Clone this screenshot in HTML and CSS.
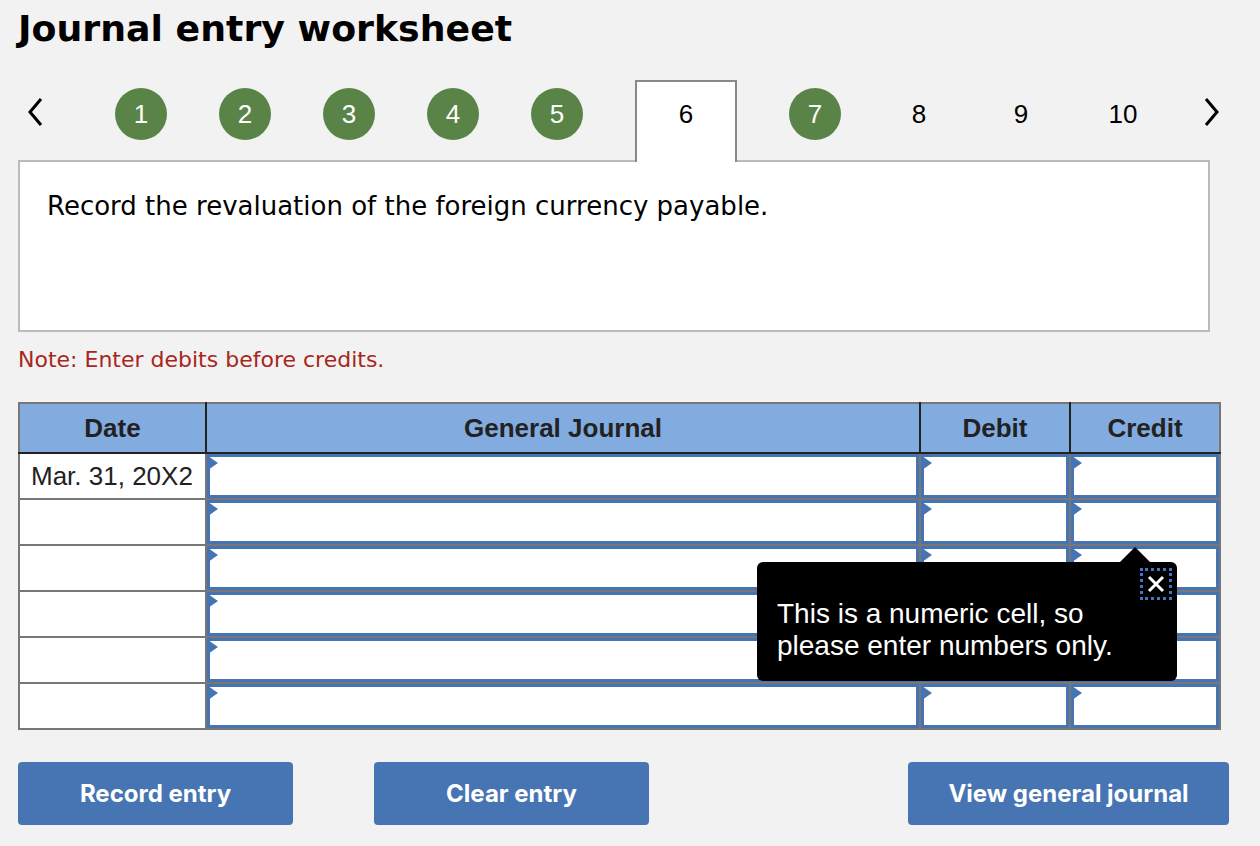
FILE: index.html
```html
<!DOCTYPE html>
<html lang="en">
<head>
  <meta charset="UTF-8" />
  <meta name="viewport" content="width=device-width, initial-scale=1.0" />
  <title>Journal entry worksheet</title>
  <link rel="stylesheet" href="styles.css">
</head>
<body>
  <div class="page">
    <h1>Journal entry worksheet</h1>

    <div class="tabs">
      <span class="arrow prev">
        <svg width="18" height="30" viewBox="0 0 18 30"><path d="M15 2 L4 15 L15 28" fill="none" stroke="#000" stroke-width="3"/></svg>
      </span>
      <span class="step done">1</span>
      <span class="step done">2</span>
      <span class="step done">3</span>
      <span class="step done">4</span>
      <span class="step done">5</span>
      <span class="step active">6</span>
      <span class="step done">7</span>
      <span class="step plain">8</span>
      <span class="step plain">9</span>
      <span class="step plain">10</span>
      <span class="arrow next">
        <svg width="18" height="30" viewBox="0 0 18 30"><path d="M3 2 L14 15 L3 28" fill="none" stroke="#000" stroke-width="3"/></svg>
      </span>
    </div>

    <div class="question">
      <p>Record the revaluation of the foreign currency payable.</p>
    </div>

    <p class="note">Note: Enter debits before credits.</p>

    <div class="journal-wrap">
      <table class="journal">
        <colgroup>
          <col class="c-date">
          <col class="c-account">
          <col class="c-amount">
          <col class="c-amount">
        </colgroup>
        <thead>
          <tr>
            <th>Date</th>
            <th>General Journal</th>
            <th>Debit</th>
            <th>Credit</th>
          </tr>
        </thead>
        <tbody id="rows"></tbody>
      </table>

      <div class="tooltip">
        <span class="close">
          <svg width="20" height="20" viewBox="0 0 20 20"><path d="M3 3 L17 17 M17 3 L3 17" stroke="#fff" stroke-width="3"/></svg>
        </span>
        This is a numeric cell, so<br>please enter numbers only.
      </div>
    </div>

    <div class="actions">
      <button class="btn record">Record entry</button>
      <button class="btn clear">Clear entry</button>
      <button class="btn view">View general journal</button>
    </div>
  </div>

  <script>
    // build the six journal rows
    const rows = document.getElementById('rows');
    for (let i = 0; i < 6; i++) {
      const tr = document.createElement('tr');
      tr.innerHTML =
        '<td class="date">' + (i === 0 ? 'Mar. 31, 20X2' : '') + '</td>' +
        '<td class="cell"><span class="flag"></span><input type="text"></td>' +
        '<td class="cell"><span class="flag"></span><input type="text"></td>' +
        '<td class="cell"><span class="flag"></span><input type="text"></td>';
      rows.appendChild(tr);
    }
  </script>
</body>
</html>
```

FILE: styles.css
```css
body {
  margin: 0;
  background: #f2f2f2;
  font-family: 'Liberation Sans', Arial, sans-serif;
  color: #000;
}
.page {
  padding: 8px 18px 0 18px;
}
h1 {
  margin: 0;
  font-family: 'DejaVu Sans', Verdana, sans-serif;
  font-size: 36.3px;
  font-weight: bold;
  line-height: 42px;
}

/* step tabs */
.tabs {
  display: flex;
  align-items: flex-start;
  gap: 52px;
  height: 80px;
  margin-top: 30px;
  position: relative;
  z-index: 1;
}
.arrow {
  width: 34px;
  height: 52px;
  margin-top: 6px;
  display: flex;
  align-items: center;
  justify-content: center;
}
.prev {
  margin-right: 11px;
}
.next {
  width: 18px;
  margin-left: 2px;
}
.step {
  width: 52px;
  height: 52px;
  margin-top: 8px;
  display: flex;
  align-items: center;
  justify-content: center;
  font-size: 26px;
}
.step.done {
  background: #5a8447;
  color: #fff;
  border-radius: 50%;
}
.step.plain + .step.plain {
  margin-left: -2px;
}
.step.active {
  width: 102px;
  height: 82px;
  margin-top: 0;
  box-sizing: border-box;
  background: #fff;
  border: 2px solid #888;
  border-bottom: none;
  padding-bottom: 16px;
}

.question {
  width: 1192px;
  height: 172px;
  box-sizing: border-box;
  background: #fff;
  border: 2px solid #bbb;
}
.question p {
  margin: 0;
  padding: 29px 0 0 27px;
  font-family: 'DejaVu Sans', Verdana, sans-serif;
  font-size: 26px;
}
.note {
  margin: 16px 0 0 0;
  font-family: 'DejaVu Sans', Verdana, sans-serif;
  font-size: 22px;
  color: #a8261d;
  line-height: 24px;
}

/* journal table */
.journal-wrap {
  position: relative;
  margin-top: 30px;
  width: 1202px;
}
.journal {
  width: 1202px;
  table-layout: fixed;
  border-collapse: collapse;
  border: 2px solid #777;
}
.c-date { width: 187px; }
.c-account { width: 714px; }
.c-amount { width: 150px; }
.journal th {
  height: 48px;
  padding: 0;
  background: #82abdf;
  color: #222;
  font-size: 26px;
  font-weight: bold;
  border-left: 2px solid #222;
  border-bottom: 2px solid #222;
}
.journal th:first-child {
  border-left: none;
}
.journal td {
  height: 44px;
  padding: 0;
  border: 2px solid #777;
  background: #fff;
}
.journal td.date {
  padding-left: 11px;
  font-size: 26px;
  color: #222;
}
.journal td.cell {
  position: relative;
}
.journal input {
  display: block;
  width: 100%;
  height: 44px;
  box-sizing: border-box;
  border: 3px solid #4674b3;
  background: #fff;
  margin: 0;
  outline: none;
}
.flag {
  position: absolute;
  left: 1px;
  top: 2px;
  width: 0;
  height: 0;
  border-left: 10px solid #4674b3;
  border-top: 7px solid transparent;
  border-bottom: 7px solid transparent;
}

.tooltip {
  position: absolute;
  left: 739px;
  top: 160px;
  width: 420px;
  height: 119px;
  box-sizing: border-box;
  padding: 36px 0 0 20px;
  background: #000;
  color: #fff;
  border-radius: 6px;
  font-size: 28px;
  line-height: 32px;
}
.tooltip::before {
  content: '';
  position: absolute;
  top: -15px;
  left: 363px;
  border-left: 15px solid transparent;
  border-right: 15px solid transparent;
  border-bottom: 15px solid #000;
}
.close {
  position: absolute;
  top: 6px;
  right: 5px;
  width: 32px;
  height: 32px;
  box-sizing: border-box;
  border: 3px dotted #4674c4;
  display: flex;
  align-items: center;
  justify-content: center;
}

/* buttons */
.actions {
  display: flex;
  width: 1211px;
  margin-top: 32px;
}
.btn {
  height: 63px;
  border: none;
  border-radius: 4px;
  background: #4775b3;
  color: #fff;
  font-family: Inter, 'Roboto', sans-serif;
  font-size: 24px;
  font-weight: bold;
  cursor: pointer;
}
.record, .clear {
  width: 275px;
}
.clear {
  margin-left: 81px;
}
.view {
  width: 321px;
  margin-left: auto;
}
```
